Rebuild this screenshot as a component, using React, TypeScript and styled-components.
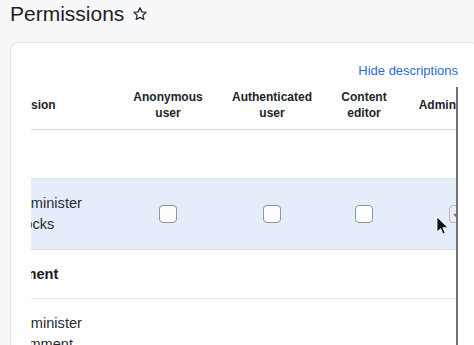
import { Fragment } from "react";
import styled, { createGlobalStyle } from "styled-components";

const GlobalStyle = createGlobalStyle`
  html, body {
    margin: 0;
    padding: 0;
    background: #f7f8fa;
    overflow: hidden;
  }
  body {
    font-family: "Liberation Sans", Arial, sans-serif;
    color: #232429;
  }
`;

const Page = styled.div`
  position: relative;
  width: 474px;
  height: 345px;
  overflow: hidden;
`;

const Header = styled.header`
  display: flex;
  align-items: center;
  gap: 8px;
  height: 28px;
  padding-left: 10px;
  margin-bottom: 14px;
`;

const Title = styled.h1`
  margin: 0;
  font-size: 21px;
  font-weight: 400;
  line-height: 28px;
  color: #1f2026;
`;

const StarButton = styled.span`
  display: flex;
  width: 16px;
  height: 16px;
  color: #2a2b31;
`;

const Card = styled.section`
  box-sizing: border-box;
  width: 469px;
  margin-left: 10px;
  padding: 18px 20px 0;
  background: #ffffff;
  border: 1px solid #e4e5ea;
  border-radius: 8px;
  box-shadow: 0 1px 3px rgba(0, 0, 0, 0.04);
  min-height: 320px;
`;

const Actions = styled.div`
  display: flex;
  justify-content: flex-end;
  margin-bottom: 6px;
`;

const TextLink = styled.a`
  font-size: 13px;
  line-height: 20px;
  color: #2f6bd6;
  text-decoration: none;
`;

const Scroller = styled.div`
  overflow: hidden;
  border-right: 2px solid #727272;
  height: 260px;
`;

const Table = styled.table`
  table-layout: fixed;
  border-collapse: collapse;
  width: 536px;
  margin-left: -52px;
`;

const HeadCell = styled.th<{ $align?: "left" | "center" }>`
  height: 42px;
  padding: 2px 12px 8px;
  box-sizing: border-box;
  font-size: 12px;
  line-height: 16px;
  font-weight: 700;
  color: #232429;
  text-align: ${({ $align }) => $align ?? "center"};
  vertical-align: middle;
  border-bottom: 1px solid #d6d7dc;
`;

const Row = styled.tr<{ $highlight?: boolean }>`
  background: ${({ $highlight }) => ($highlight ? "#e5ecfa" : "transparent")};
  border-bottom: 1px solid ${({ $highlight }) => ($highlight ? "#dce3f2" : "#e4e5e9")};
`;

const ModuleCell = styled.td`
  height: 48px;
  padding: 0 12px;
  font-size: 14.6px;
  font-weight: 700;
  color: #1f2026;
  white-space: nowrap;
`;

const PermissionCell = styled.td`
  padding: 14px 12px 14px 34px;
  font-size: 14.6px;
  line-height: 21px;
  color: #2a2b31;
  vertical-align: middle;
`;

const Description = styled.div`
  margin-top: 6px;
  font-size: 12px;
  line-height: 17px;
  color: #55565b;
`;

const CheckCell = styled.td`
  text-align: center;
  vertical-align: middle;
`;

const Box = styled.span<{ $disabled?: boolean }>`
  display: inline-flex;
  align-items: center;
  justify-content: center;
  box-sizing: border-box;
  width: 18px;
  height: 18px;
  border: 1.5px solid ${({ $disabled }) => ($disabled ? "#b4b6bc" : "#8f929a")};
  border-radius: 4px;
  background: ${({ $disabled }) => ($disabled ? "#ececee" : "#ffffff")};
  vertical-align: middle;
  color: #606268;
`;

const Cursor = styled.svg`
  position: absolute;
  left: 436px;
  top: 216px;
  width: 12px;
  height: 19px;
`;

const roles = ["Anonymous user", "Authenticated user", "Content editor", "Administrator"];
const widths = [140, 98, 110, 74, 114];

type Perm = { title: string; description?: string; checked: boolean[]; highlight?: boolean };
const groups: { module: string; perms: Perm[] }[] = [
  {
    module: "Block",
    perms: [{ title: "Administer blocks", checked: [false, false, false, true], highlight: true }],
  },
  {
    module: "Comment",
    perms: [
      {
        title: "Administer comment types and settings",
        description: "Warning: Give to trusted roles only; this permission has security implications.",
        checked: [false, false, false, true],
      },
    ],
  },
];

const Star = () => (
  <svg viewBox="0 0 24 24" width="16" height="16" fill="none" stroke="currentColor" strokeWidth="1.9" strokeLinejoin="round">
    <path d="M12 2.8l2.8 6 6.4.7-4.8 4.4 1.4 6.4L12 17l-5.8 3.3 1.4-6.4-4.8-4.4 6.4-.7z" />
  </svg>
);

const Check = ({ checked, disabled }: { checked: boolean; disabled?: boolean }) => (
  <Box $disabled={disabled}>
    {checked && (
      <svg viewBox="0 0 16 16" width="12" height="12" fill="none" stroke="currentColor" strokeWidth="2.2" strokeLinecap="round" strokeLinejoin="round">
        <path d="M3.5 8.5l3 3 6-7" />
      </svg>
    )}
  </Box>
);

export default function App() {
  return (
    <Page>
      <GlobalStyle />
      <Header>
        <Title>Permissions</Title>
        <StarButton>
          <Star />
        </StarButton>
      </Header>
      <Card>
        <Actions>
          <TextLink href="#">Hide descriptions</TextLink>
        </Actions>
        <Scroller>
          <Table>
            <colgroup>
              {widths.map((w, i) => (
                <col key={i} style={{ width: w }} />
              ))}
            </colgroup>
            <thead>
              <tr>
                <HeadCell $align="left">Permission</HeadCell>
                {roles.map((r) => (
                  <HeadCell key={r}>{r}</HeadCell>
                ))}
              </tr>
            </thead>
            <tbody>
              {groups.map((g) => (
                <Fragment key={g.module}>
                  <Row>
                    <ModuleCell colSpan={5}>{g.module}</ModuleCell>
                  </Row>
                  {g.perms.map((p) => (
                    <Row key={p.title} $highlight={p.highlight}>
                      <PermissionCell>
                        {p.title}
                        {p.description && <Description>{p.description}</Description>}
                      </PermissionCell>
                      {p.checked.map((c, i) => (
                        <CheckCell key={i}>
                          <Check checked={c} disabled={i === 3} />
                        </CheckCell>
                      ))}
                    </Row>
                  ))}
                </Fragment>
              ))}
            </tbody>
          </Table>
        </Scroller>
      </Card>
      <Cursor viewBox="0 0 12 19">
        <path d="M1 1v15l3.6-3.4 2.4 5.4 2.2-1-2.4-5.3H12z" fill="#111" stroke="#ffffff" strokeWidth="0.8" strokeLinejoin="round" />
      </Cursor>
    </Page>
  );
}
